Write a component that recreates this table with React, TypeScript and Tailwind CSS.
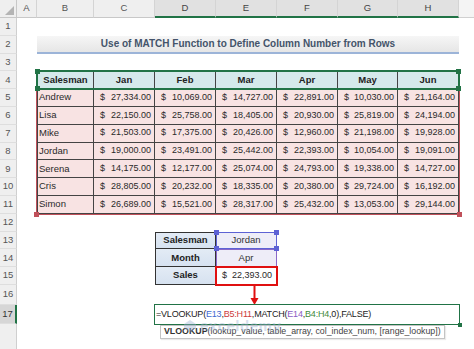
import React from "react";

const COL = ["", "col-start-1", "col-start-2", "col-start-3", "col-start-4", "col-start-5", "col-start-6", "col-start-7", "col-start-8", "col-start-9", "col-start-10"];
const ROW = ["", "row-start-1", "row-start-2", "row-start-3", "row-start-4", "row-start-5", "row-start-6", "row-start-7", "row-start-8", "row-start-9", "row-start-10", "row-start-11", "row-start-12", "row-start-13", "row-start-14", "row-start-15", "row-start-16", "row-start-17", "row-start-18", "row-start-19"];

const letters = ["A", "B", "C", "D", "E", "F", "G", "H"];
const months = ["Jan", "Feb", "Mar", "Apr", "May", "Jun"];
const data: [string, string[]][] = [
  ["Andrew", ["27,334.00", "10,069.00", "14,727.00", "22,891.00", "10,030.00", "21,164.00"]],
  ["Lisa", ["22,150.00", "25,758.00", "18,405.00", "20,930.00", "25,819.00", "24,194.00"]],
  ["Mike", ["21,503.00", "17,375.00", "20,426.00", "12,960.00", "21,198.00", "19,928.00"]],
  ["Jordan", ["19,000.00", "23,491.00", "25,442.00", "22,393.00", "10,054.00", "19,091.00"]],
  ["Serena", ["14,175.00", "12,177.00", "25,074.00", "24,793.00", "19,338.00", "14,727.00"]],
  ["Cris", ["28,805.00", "20,232.00", "18,335.00", "20,380.00", "29,724.00", "16,192.00"]],
  ["Simon", ["26,689.00", "15,521.00", "28,317.00", "25,432.00", "13,053.00", "29,144.00"]],
];

function Handle({ pos, color }: { pos: string; color: string }) {
  return <span className={`absolute w-[5px] h-[5px] ${pos} ${color}`} />;
}

export default function App() {
  return (
    <div className="w-[474px] h-[349px] overflow-hidden bg-white font-['Liberation_Sans',Arial,sans-serif] text-[#222]">
      <div className="grid grid-cols-[17px_20px_57px_61px_61px_61px_61px_60px_61px_1fr] grid-rows-[18px_repeat(15,17.8px)_20px_19px_40px]">
        {/* corner */}
        <div className="col-start-1 row-start-1 bg-[#efefef] border-r border-b border-[#c8c8c8] relative">
          <svg className="absolute right-[2px] bottom-[2px]" width="9" height="9" viewBox="0 0 9 9">
            <polygon points="9,0 9,9 0,9" fill="#b4b4b4" />
          </svg>
        </div>
        {/* column headers */}
        {letters.map((l, i) => {
          const active = i >= 3;
          return (
            <div
              key={l}
              className={`${COL[i + 2]} row-start-1 flex items-center justify-center text-[9.5px] border-r border-[#d4d4d4] ${
                active ? "bg-[#e1e1e1] border-b-2 border-b-[#217346] text-[#444]" : "bg-[#efefef] border-b border-b-[#c8c8c8] text-[#555]"
              }`}
            >
              {l}
            </div>
          );
        })}
        <div className="col-start-10 row-start-1 bg-[#f4f4f4] border-b border-[#d0d0d0]" />

        {/* row headers */}
        {Array.from({ length: 18 }, (_, i) => {
          const n = i + 1;
          const active = n === 17;
          return (
            <div
              key={n}
              className={`${ROW[n + 1]} col-start-1 flex items-center justify-center text-[9.5px] border-b border-[#dedede] ${
                active ? "bg-[#d6d6d6] border-r-2 border-r-[#217346] text-[#333]" : "bg-[#efefef] border-r border-r-[#cfcfcf] text-[#555]"
              }`}
            >
              {n <= 17 ? n : ""}
            </div>
          );
        })}

        {/* title */}
        <div className="col-start-3 col-span-7 row-start-3 flex items-center justify-center bg-gradient-to-b from-[#f6f6f6] to-[#e6e6e6] border-b-2 border-[#9cb4d8] text-[10px] font-bold text-[#44546a]">
          Use of MATCH Function to Define Column Number from Rows
        </div>

        {/* main table header */}
        <div className="col-start-3 row-start-5 flex items-center justify-center bg-[#d5e9eb] border border-[#444] text-[9.5px] font-bold">
          Salesman
        </div>
        {months.map((m, i) => (
          <div
            key={m}
            className={`${COL[i + 4]} row-start-5 flex items-center justify-center bg-[#d5e9eb] border-t border-r border-b border-[#444] text-[9.5px] font-bold`}
          >
            {m}
          </div>
        ))}

        {/* main table body */}
        {data.map(([name, vals], r) => (
          <React.Fragment key={name}>
            <div className={`col-start-3 ${ROW[r + 6]} flex items-center pl-[1px] bg-[#f8e3e3] border-l border-r border-b border-[#444] text-[9.5px] text-[#2a2a2a]`}>
              {name}
            </div>
            {vals.map((v, c) => (
              <div
                key={c}
                className={`${COL[c + 4]} ${ROW[r + 6]} flex items-center justify-between pl-[6px] pr-[3px] bg-[#f8e3e3] border-r border-b border-[#444] text-[9px] text-[#2a2a2a]`}
              >
                <span>$</span>
                <span>{v}</span>
              </div>
            ))}
          </React.Fragment>
        ))}

        {/* range highlight: B4:H4 */}
        <div className="col-start-3 col-span-7 row-start-5 -m-px border-2 border-[#217346] relative z-10 pointer-events-none">
          <Handle pos="-left-[3px] -top-[3px]" color="bg-[#217346]" />
          <Handle pos="-right-[3px] -top-[3px]" color="bg-[#217346]" />
          <Handle pos="-left-[3px] -bottom-[3px]" color="bg-[#217346]" />
          <Handle pos="-right-[3px] -bottom-[3px]" color="bg-[#217346]" />
        </div>
        {/* range highlight: B5:H11 */}
        <div className="col-start-3 col-span-7 row-start-6 row-span-7 -ml-px -mr-px -mb-px border-[1.5px] border-t-0 border-[#c0505a] relative z-[5] pointer-events-none">
          <Handle pos="-left-[3px] -bottom-[3px]" color="bg-[#c0505a]" />
          <Handle pos="-right-[3px] -bottom-[3px]" color="bg-[#c0505a]" />
        </div>

        {/* lookup table */}
        {["Salesman", "Month", "Sales"].map((l, i) => (
          <div
            key={l}
            className={`col-start-5 ${ROW[i + 14]} flex items-center justify-center bg-gradient-to-b from-[#e3ebf5] to-[#d6e2f0] border-l border-r border-b border-[#333] ${i === 0 ? "border-t" : ""} text-[9.5px] font-bold`}
          >
            {l}
          </div>
        ))}
        <div className="col-start-6 row-start-14 flex items-center justify-center bg-[#eeedf8] border-t border-r border-b border-[#333] text-[9.5px] text-[#333]">
          Jordan
        </div>
        <div className="col-start-6 row-start-15 flex items-center justify-center bg-[#eeedf8] border-r border-b border-[#333] text-[9.5px] text-[#333]">
          Apr
        </div>
        <div className="col-start-6 row-start-16 flex items-center justify-between pl-[6px] pr-[4px] bg-white border-r border-b border-[#333] text-[9px] text-[#2a2a2a]">
          <span>$</span>
          <span>22,393.00</span>
        </div>
        {/* E14 highlight */}
        <div className="col-start-6 row-start-15 border-[1.5px] border-[#8a68c8] relative z-[5] pointer-events-none" />
        {/* E13 highlight */}
        <div className="col-start-6 row-start-14 border-[1.5px] border-[#5d62d4] relative z-10 pointer-events-none">
          <Handle pos="-left-[3px] -top-[3px]" color="bg-[#5d62d4]" />
          <Handle pos="-right-[3px] -top-[3px]" color="bg-[#5d62d4]" />
          <Handle pos="-left-[3px] -bottom-[3px]" color="bg-[#5d62d4]" />
          <Handle pos="-right-[3px] -bottom-[3px]" color="bg-[#5d62d4]" />
        </div>
        {/* Sales red box */}
        <div className="col-start-6 row-start-16 -m-px border-2 border-[#e01010] relative z-10 pointer-events-none" />

        {/* arrow */}
        <div className="col-start-6 row-start-17 flex items-stretch pl-[34px]">
          <svg width="9" height="20" viewBox="0 0 9 20">
            <line x1="4.5" y1="0" x2="4.5" y2="14" stroke="#e01010" strokeWidth="2" />
            <polygon points="0.5,13 8.5,13 4.5,20" fill="#e01010" />
          </svg>
        </div>

        {/* formula cell */}
        <div className="col-start-5 col-span-5 row-start-18 -m-px border-[1.5px] border-[#217346] bg-white relative z-10 flex items-center pl-[1px] text-[9px] tracking-[-0.2px] text-[#222]">
          <span>=VLOOKUP(</span>
          <span className="text-[#4169d0]">E13</span>
          <span>,</span>
          <span className="text-[#cc3b3b]">B5:H11</span>
          <span>,MATCH(</span>
          <span className="text-[#8a5cc4]">E14</span>
          <span>,</span>
          <span className="text-[#3f8a3a]">B4:H4</span>
          <span>,0),FALSE)</span>
          <span className="absolute -right-[3px] -bottom-[3px] w-[4px] h-[4px] bg-[#217346]" />
        </div>

        {/* tooltip */}
        <div className="col-start-5 col-span-5 row-start-19 relative z-20 self-start pl-[5px] pt-[1px]">
          <div className="relative w-fit h-[14px] flex items-center px-[3px] bg-white border border-[#c4c4c4] text-[8.8px] text-[#444] shadow-[1px_1px_1px_rgba(0,0,0,0.08)]">
            <span className="font-bold text-[#333]">VLOOKUP</span>
            <span>(lookup_value, table_array, col_index_num, [range_lookup])</span>
            <span className="absolute left-[22px] -top-[11px] flex items-center gap-[3px] text-[15px] font-bold tracking-[0.5px] text-[#9db4d4] opacity-40 pointer-events-none">
              <svg width="14" height="14" viewBox="0 0 14 14">
                <path d="M7 1 L13 5 L13 9 L7 13 L1 9 L1 5 Z" fill="#9db4d4" />
              </svg>
              exceldemy
            </span>
          </div>
        </div>
      </div>
    </div>
  );
}
